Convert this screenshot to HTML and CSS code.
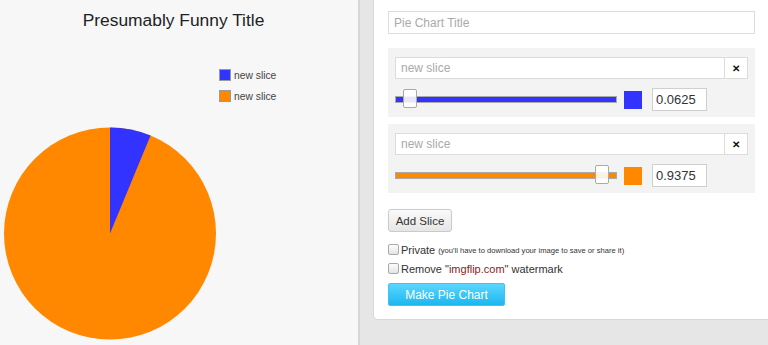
FILE: index.html
```html
<!DOCTYPE html>
<html>
	<head>
		<title>Pie Chart Maker</title>
		<meta charset="utf-8">
		<link rel="stylesheet" href="styles.css">
	</head>
	<body>
		<div id="preview">
			<h1 id="chartTitle">Presumably Funny Title</h1>
			<svg id="chart" width="358" height="315" viewBox="0 0 358 315">
				<rect x="219.5" y="39.5" width="11" height="11" fill="#3333ff" stroke="#999"/>
				<text x="234" y="49">new slice</text>
				<rect x="219.5" y="60.5" width="11" height="11" fill="#ff8800" stroke="#999"/>
				<text x="234" y="70">new slice</text>
				<circle cx="110" cy="203.5" r="106" fill="#ff8800"/>
				<path d="M110 203.5 L110 97.5 A106 106 0 0 1 150.56 105.57 Z" fill="#3333ff"/>
			</svg>
		</div>

		<div id="editor">
			<input type="text" class="textbox" placeholder="Pie Chart Title">

			<div class="slice">
				<div class="nameRow">
					<input type="text" class="textbox" placeholder="new slice">
					<span class="remove">&#x2715;</span>
				</div>
				<div class="valueRow">
					<div class="track blue">
						<span class="thumb" style="left:calc(6.25% - 7px)"></span>
					</div>
					<span class="swatch blue"></span>
					<input type="text" class="value" value="0.0625">
				</div>
			</div>

			<div class="slice">
				<div class="nameRow">
					<input type="text" class="textbox" placeholder="new slice">
					<span class="remove">&#x2715;</span>
				</div>
				<div class="valueRow">
					<div class="track orange">
						<span class="thumb" style="left:calc(93.75% - 7px)"></span>
					</div>
					<span class="swatch orange"></span>
					<input type="text" class="value" value="0.9375">
				</div>
			</div>

			<button class="button" id="addSlice">Add Slice</button>

			<label class="option"><input type="checkbox"> Private <small>(you'll have to download your image to save or share it)</small></label>
			<label class="option"><input type="checkbox"> Remove "<span class="site">imgflip.com</span>" watermark</label>

			<button class="button" id="make">Make Pie Chart</button>
		</div>
	</body>
</html>
```

FILE: styles.css
```css
*{
	margin:0;
	padding:0;
	box-sizing:border-box;
}
body{
	background-color:#e6e6e6;
	font-family:"Liberation Sans", Arial, sans-serif;
	color:#333;
	display:flex;
	align-items:flex-start;
	overflow:hidden;
	width:768px;
	height:345px;
}
#preview{
	flex:none;
	width:360px;
	height:345px;
	background-color:#f7f7f7;
	border-right:2px solid #d6d6d6;
}
#chartTitle{
	font-size:17.4px;
	font-weight:normal;
	line-height:20px;
	color:#222;
	text-align:center;
	padding:10px 11px 0 0;
	height:30px;
}
#chart{
	display:block;
}
#chart text{
	font-family:"Liberation Sans", Arial, sans-serif;
	font-size:10.3px;
	fill:#444;
}
#editor{
	flex:none;
	width:396px;
	margin-left:13px;
	background-color:white;
	border-left:1px solid #d8d8d8;
	border-bottom:1px solid #d8d8d8;
	border-bottom-left-radius:5px;
	padding:11px 14px 13px 14px;
	display:flex;
	flex-direction:column;
	align-items:flex-start;
}
.textbox{
	display:block;
	width:100%;
	height:23px;
	border:1px solid #dcdcdc;
	padding:0 5px;
	font-family:"Liberation Sans", Arial, sans-serif;
	font-size:12px;
	color:#333;
	outline:none;
}
.textbox::placeholder{
	color:#aaa;
}
.slice{
	width:100%;
	background-color:#f3f3f3;
	padding:9px 7px 6px 7px;
	margin-top:14px;
}
.slice + .slice{
	margin-top:7px;
}
.nameRow{
	display:flex;
	height:22px;
}
.nameRow .textbox{
	flex:1;
	height:22px;
}
.remove{
	flex:none;
	width:23px;
	height:22px;
	border:1px solid #dcdcdc;
	border-left:none;
	background-color:white;
	font-size:10px;
	font-weight:bold;
	color:#111;
	display:flex;
	align-items:center;
	justify-content:center;
}
.valueRow{
	display:flex;
	align-items:center;
	height:23px;
	margin-top:9px;
}
.track{
	flex:none;
	width:222px;
	height:7px;
	border:1px solid #aaa;
	position:relative;
}
.thumb{
	position:absolute;
	top:-8px;
	width:14px;
	height:19px;
	border:1px solid #aaa;
	border-radius:2px;
	background-color:rgba(255,255,255,0.88);
}
.swatch{
	flex:none;
	width:18px;
	height:18px;
	margin-left:7px;
}
.blue{
	background-color:#3333ff;
}
.orange{
	background-color:#ff8800;
}
.value{
	width:55px;
	height:23px;
	margin-left:10px;
	border:1px solid #cfcfcf;
	padding:0 3px;
	font-family:"Liberation Sans", Arial, sans-serif;
	font-size:13px;
	color:#333;
	outline:none;
}
.button{
	height:23px;
	border-radius:3px;
	font-family:"Liberation Sans", Arial, sans-serif;
	cursor:pointer;
}
#addSlice{
	width:64px;
	margin-top:16px;
	margin-bottom:8px;
	border:1px solid #cacaca;
	background:linear-gradient(#fafafa, #e6e6e6);
	font-size:11.5px;
	color:#333;
}
.option{
	display:flex;
	align-items:center;
	height:19px;
	font-size:11px;
	color:#333;
	white-space:nowrap;
}
.option input{
	-webkit-appearance:none;
	appearance:none;
	width:11px;
	height:11px;
	margin:0 2px 0 0;
	border:1px solid #a9a9a9;
	border-radius:2px;
	background:linear-gradient(#fdfdfd, #e4e4e4);
}
.option small{
	font-size:7.6px;
	margin-left:3px;
	position:relative;
	top:1px;
}
.site{
	color:#8b1a1a;
}
#make{
	width:117px;
	margin-top:5px;
	border:1px solid #3cc4f2;
	border-radius:2px;
	background:linear-gradient(#5ad6ff, #1cb7f0);
	font-size:12px;
	color:white;
}
```
